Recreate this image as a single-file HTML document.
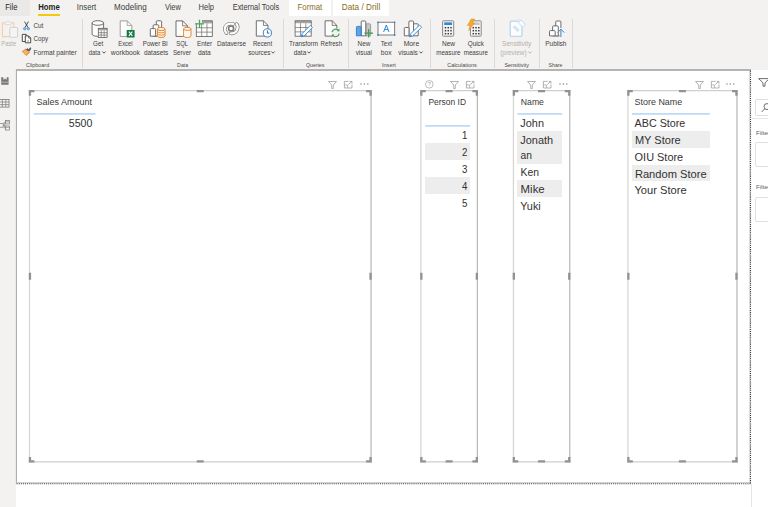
<!DOCTYPE html>
<html><head><meta charset="utf-8"><title>Power BI Desktop</title>
<style>
html,body{margin:0;padding:0}
body{width:768px;height:507px;overflow:hidden;background:#f3f2f1;position:relative;font-family:"Liberation Sans",sans-serif}
.t{position:absolute;white-space:pre;transform-origin:0 0;display:block}
.r{position:absolute;display:block;overflow:visible}
</style></head><body>
<div class="r" style="left:0px;top:0px;width:30px;height:15.5px;background:#eae9e8;"></div>
<div class="r" style="left:289.2px;top:0px;width:42.3px;height:15.6px;background:#ffffff;"></div>
<div class="r" style="left:333.4px;top:0px;width:55.4px;height:15.6px;background:#ffffff;"></div>
<div class="r" style="left:16px;top:70px;width:752px;height:437px;background:#ffffff;"></div>
<div class="r" style="left:16px;top:69.2px;width:735px;height:1.6px;background:#b4b4b4;"></div>
<svg class="r" style="left:0;top:0" width="768" height="507" viewBox="0 0 768 507"><rect x="15.9" y="70" width="1.05" height="413.6" fill="#a9a9a9"/><rect x="16" y="482.2" width="735" height="1" fill="#c6c6c6"/><rect x="749.3" y="70.8" width="1" height="412.6" fill="#d4d4d4"/><path d="M16.6 483.65 H751" stroke="#3c3c3c" stroke-width="1.05" stroke-dasharray="1.05 1.05" fill="none"/><path d="M750.5 70.6 V484" stroke="#3c3c3c" stroke-width="1.1" stroke-dasharray="1.05 1.05" fill="none"/></svg>
<div class="r" style="left:750.8px;top:484px;width:1px;height:23px;background:#e6e6e6;"></div>
<div class="r" style="left:38.1px;top:13.6px;width:21.7px;height:2.2px;background:#f2c811;"></div>
<div class="r" style="left:82.1px;top:19px;width:1px;height:48.5px;background:#dcdad8;"></div>
<div class="r" style="left:282.5px;top:19px;width:1px;height:48.5px;background:#dcdad8;"></div>
<div class="r" style="left:347.7px;top:19px;width:1px;height:48.5px;background:#dcdad8;"></div>
<div class="r" style="left:430.2px;top:19px;width:1px;height:48.5px;background:#dcdad8;"></div>
<div class="r" style="left:494.0px;top:19px;width:1px;height:48.5px;background:#dcdad8;"></div>
<div class="r" style="left:538.8px;top:19px;width:1px;height:48.5px;background:#dcdad8;"></div>
<div class="r" style="left:571.8px;top:19px;width:1px;height:48.5px;background:#dcdad8;"></div>
<svg class="r" style="left:101.6px;top:50.8px" width="4" height="3" viewBox="0 0 4 3"><path d="M0.4 0.5 L2 2.2 L3.6 0.5" fill="none" stroke="#484644" stroke-width="0.9"/></svg>
<svg class="r" style="left:271.4px;top:50.8px" width="4" height="3" viewBox="0 0 4 3"><path d="M0.4 0.5 L2 2.2 L3.6 0.5" fill="none" stroke="#484644" stroke-width="0.9"/></svg>
<svg class="r" style="left:307.4px;top:50.8px" width="4" height="3" viewBox="0 0 4 3"><path d="M0.4 0.5 L2 2.2 L3.6 0.5" fill="none" stroke="#484644" stroke-width="0.9"/></svg>
<svg class="r" style="left:418.8px;top:50.8px" width="4" height="3" viewBox="0 0 4 3"><path d="M0.4 0.5 L2 2.2 L3.6 0.5" fill="none" stroke="#484644" stroke-width="0.9"/></svg>
<svg class="r" style="left:528.0px;top:50.8px" width="4" height="3" viewBox="0 0 4 3"><path d="M0.4 0.5 L2 2.2 L3.6 0.5" fill="none" stroke="#b3b0ad" stroke-width="0.9"/></svg>
<svg class="r" style="left:0;top:0" width="768" height="507" viewBox="0 0 768 507"><path d="M28.80 90.67 H371.70 M28.80 461.77 H371.70" fill="none" stroke="#cfcecd" stroke-width="1.25"/><path d="M29.53 90.05 V462.50" fill="none" stroke="#d6d5d4" stroke-width="1.25"/><path d="M371.07 90.05 V462.50" fill="none" stroke="#b9b8b7" stroke-width="1.25"/><path d="M28.80 90.05 h5.60 v2.30 h-5.60 Z M28.80 90.05 h2.30 v5.60 h-2.30 Z M28.80 460.20 h5.60 v2.30 h-5.60 Z M28.80 456.90 h2.30 v5.60 h-2.30 Z M366.10 90.05 h5.60 v2.30 h-5.60 Z M369.40 90.05 h2.30 v5.60 h-2.30 Z M366.10 460.20 h5.60 v2.30 h-5.60 Z M369.40 456.90 h2.30 v5.60 h-2.30 Z M196.75 90.05 h7.00 v2.30 h-7.00 Z M196.75 460.20 h7.00 v2.30 h-7.00 Z M28.80 272.77 h2.30 v7.00 h-2.30 Z M369.40 272.77 h2.30 v7.00 h-2.30 Z " fill="#939291"/><path d="M420.20 90.67 H478.00 M420.20 461.77 H478.00" fill="none" stroke="#cfcecd" stroke-width="1.25"/><path d="M420.93 90.05 V462.50" fill="none" stroke="#d6d5d4" stroke-width="1.25"/><path d="M477.38 90.05 V462.50" fill="none" stroke="#b9b8b7" stroke-width="1.25"/><path d="M420.20 90.05 h5.60 v2.30 h-5.60 Z M420.20 90.05 h2.30 v5.60 h-2.30 Z M420.20 460.20 h5.60 v2.30 h-5.60 Z M420.20 456.90 h2.30 v5.60 h-2.30 Z M472.40 90.05 h5.60 v2.30 h-5.60 Z M475.70 90.05 h2.30 v5.60 h-2.30 Z M472.40 460.20 h5.60 v2.30 h-5.60 Z M475.70 456.90 h2.30 v5.60 h-2.30 Z M445.60 90.05 h7.00 v2.30 h-7.00 Z M445.60 460.20 h7.00 v2.30 h-7.00 Z M420.20 272.77 h2.30 v7.00 h-2.30 Z M475.70 272.77 h2.30 v7.00 h-2.30 Z " fill="#939291"/><path d="M512.70 90.67 H570.40 M512.70 461.77 H570.40" fill="none" stroke="#cfcecd" stroke-width="1.25"/><path d="M513.43 90.05 V462.50" fill="none" stroke="#d6d5d4" stroke-width="1.25"/><path d="M569.77 90.05 V462.50" fill="none" stroke="#b9b8b7" stroke-width="1.25"/><path d="M512.70 90.05 h5.60 v2.30 h-5.60 Z M512.70 90.05 h2.30 v5.60 h-2.30 Z M512.70 460.20 h5.60 v2.30 h-5.60 Z M512.70 456.90 h2.30 v5.60 h-2.30 Z M564.80 90.05 h5.60 v2.30 h-5.60 Z M568.10 90.05 h2.30 v5.60 h-2.30 Z M564.80 460.20 h5.60 v2.30 h-5.60 Z M568.10 456.90 h2.30 v5.60 h-2.30 Z M538.05 90.05 h7.00 v2.30 h-7.00 Z M538.05 460.20 h7.00 v2.30 h-7.00 Z M512.70 272.77 h2.30 v7.00 h-2.30 Z M568.10 272.77 h2.30 v7.00 h-2.30 Z " fill="#939291"/><path d="M627.20 90.67 H737.60 M627.20 461.77 H737.60" fill="none" stroke="#cfcecd" stroke-width="1.25"/><path d="M627.93 90.05 V462.50" fill="none" stroke="#d6d5d4" stroke-width="1.25"/><path d="M736.98 90.05 V462.50" fill="none" stroke="#b9b8b7" stroke-width="1.25"/><path d="M627.20 90.05 h5.60 v2.30 h-5.60 Z M627.20 90.05 h2.30 v5.60 h-2.30 Z M627.20 460.20 h5.60 v2.30 h-5.60 Z M627.20 456.90 h2.30 v5.60 h-2.30 Z M732.00 90.05 h5.60 v2.30 h-5.60 Z M735.30 90.05 h2.30 v5.60 h-2.30 Z M732.00 460.20 h5.60 v2.30 h-5.60 Z M735.30 456.90 h2.30 v5.60 h-2.30 Z M678.90 90.05 h7.00 v2.30 h-7.00 Z M678.90 460.20 h7.00 v2.30 h-7.00 Z M627.20 272.77 h2.30 v7.00 h-2.30 Z M735.30 272.77 h2.30 v7.00 h-2.30 Z " fill="#939291"/></svg>
<svg class="r" style="left:0;top:0" width="768" height="507"><rect x="33.8" y="113.25" width="61.8" height="1.35" fill="#a9d0f5"/></svg>
<svg class="r" style="left:0;top:0" width="768" height="507"><rect x="425.2" y="125.25" width="45" height="1.35" fill="#a9d0f5"/></svg>
<div class="r" style="left:425.2px;top:143.1px;width:45px;height:16.9px;background:#ededed;"></div>
<div class="r" style="left:425.2px;top:177.2px;width:45px;height:16.9px;background:#ededed;"></div>
<svg class="r" style="left:0;top:0" width="768" height="507"><rect x="517.4" y="113.25" width="44.8" height="1.35" fill="#a9d0f5"/></svg>
<div class="r" style="left:517.4px;top:131.0px;width:44.8px;height:32.6px;background:#ededed;"></div>
<div class="r" style="left:517.4px;top:180.0px;width:44.8px;height:17.0px;background:#ededed;"></div>
<svg class="r" style="left:0;top:0" width="768" height="507"><rect x="632.0" y="113.25" width="77.9" height="1.35" fill="#a9d0f5"/></svg>
<div class="r" style="left:632.0px;top:130.9px;width:77.9px;height:16.8px;background:#ededed;"></div>
<div class="r" style="left:632.0px;top:164.7px;width:77.9px;height:16.8px;background:#ededed;"></div>
<svg class="r" style="left:328.2px;top:80.8px" width="9" height="8" viewBox="0 0 9 8"><path d="M0.5 0.5 H8.5 L5.3 4 V7.5 H3.7 V4 Z" fill="none" stroke="#a19f9d" stroke-width="0.8" stroke-linejoin="round"/></svg>
<svg class="r" style="left:344px;top:81px" width="8.4" height="7.4" viewBox="0 0 8.4 7.4"><path d="M4.6 0.4 H0.4 V7 H8 V3.4" fill="none" stroke="#a19f9d" stroke-width="0.8"/><path d="M0.4 4 H3.6 V7" fill="none" stroke="#a19f9d" stroke-width="0.7"/><path d="M4.2 3.6 L8 0.4 M5.6 0.4 H8 V2.6" fill="none" stroke="#a19f9d" stroke-width="0.8"/></svg>
<svg class="r" style="left:359.6px;top:83.2px" width="9" height="2" viewBox="0 0 9 2"><circle cx="1" cy="1" r="0.75" fill="#8a8886"/><circle cx="4.4" cy="1" r="0.75" fill="#8a8886"/><circle cx="7.8" cy="1" r="0.75" fill="#8a8886"/></svg>
<svg class="r" style="left:425.2px;top:80.4px" width="8.6" height="8.6" viewBox="0 0 8.6 8.6"><circle cx="4.3" cy="4.3" r="3.8" fill="none" stroke="#a19f9d" stroke-width="0.7"/><text x="4.3" y="6.4" font-size="5.6" text-anchor="middle" fill="#a19f9d" font-family="Liberation Sans, sans-serif">?</text></svg>
<svg class="r" style="left:449.8px;top:80.8px" width="9" height="8" viewBox="0 0 9 8"><path d="M0.5 0.5 H8.5 L5.3 4 V7.5 H3.7 V4 Z" fill="none" stroke="#a19f9d" stroke-width="0.8" stroke-linejoin="round"/></svg>
<svg class="r" style="left:466px;top:81px" width="8.4" height="7.4" viewBox="0 0 8.4 7.4"><path d="M4.6 0.4 H0.4 V7 H8 V3.4" fill="none" stroke="#a19f9d" stroke-width="0.8"/><path d="M0.4 4 H3.6 V7" fill="none" stroke="#a19f9d" stroke-width="0.7"/><path d="M4.2 3.6 L8 0.4 M5.6 0.4 H8 V2.6" fill="none" stroke="#a19f9d" stroke-width="0.8"/></svg>
<svg class="r" style="left:527.4px;top:80.8px" width="9" height="8" viewBox="0 0 9 8"><path d="M0.5 0.5 H8.5 L5.3 4 V7.5 H3.7 V4 Z" fill="none" stroke="#a19f9d" stroke-width="0.8" stroke-linejoin="round"/></svg>
<svg class="r" style="left:543.2px;top:81px" width="8.4" height="7.4" viewBox="0 0 8.4 7.4"><path d="M4.6 0.4 H0.4 V7 H8 V3.4" fill="none" stroke="#a19f9d" stroke-width="0.8"/><path d="M0.4 4 H3.6 V7" fill="none" stroke="#a19f9d" stroke-width="0.7"/><path d="M4.2 3.6 L8 0.4 M5.6 0.4 H8 V2.6" fill="none" stroke="#a19f9d" stroke-width="0.8"/></svg>
<svg class="r" style="left:558.6px;top:83.2px" width="9" height="2" viewBox="0 0 9 2"><circle cx="1" cy="1" r="0.75" fill="#8a8886"/><circle cx="4.4" cy="1" r="0.75" fill="#8a8886"/><circle cx="7.8" cy="1" r="0.75" fill="#8a8886"/></svg>
<svg class="r" style="left:694.8px;top:80.8px" width="9" height="8" viewBox="0 0 9 8"><path d="M0.5 0.5 H8.5 L5.3 4 V7.5 H3.7 V4 Z" fill="none" stroke="#a19f9d" stroke-width="0.8" stroke-linejoin="round"/></svg>
<svg class="r" style="left:710.8px;top:81px" width="8.4" height="7.4" viewBox="0 0 8.4 7.4"><path d="M4.6 0.4 H0.4 V7 H8 V3.4" fill="none" stroke="#a19f9d" stroke-width="0.8"/><path d="M0.4 4 H3.6 V7" fill="none" stroke="#a19f9d" stroke-width="0.7"/><path d="M4.2 3.6 L8 0.4 M5.6 0.4 H8 V2.6" fill="none" stroke="#a19f9d" stroke-width="0.8"/></svg>
<svg class="r" style="left:725.6px;top:83.2px" width="9" height="2" viewBox="0 0 9 2"><circle cx="1" cy="1" r="0.75" fill="#8a8886"/><circle cx="4.4" cy="1" r="0.75" fill="#8a8886"/><circle cx="7.8" cy="1" r="0.75" fill="#8a8886"/></svg>
<svg class="r" style="left:0px;top:77px" width="10" height="8" viewBox="0 0 10 8"><path d="M1.2 0.2 V7.8 H8.6 V0.2 H6.6 V3 L5 1.6 L3.4 3 V0.2 Z" fill="#7a7876"/><path d="M1.2 5.2 H8.6" stroke="#f3f2f1" stroke-width="0.5"/></svg>
<svg class="r" style="left:0px;top:98.6px" width="10" height="9" viewBox="0 0 10 9"><rect x="-1" y="0.5" width="10" height="7.6" fill="none" stroke="#7a7876" stroke-width="0.8"/><path d="M-1 3 H9 M-1 5.6 H9 M2.4 0.5 V8 M5.8 0.5 V8" stroke="#7a7876" stroke-width="0.7"/></svg>
<svg class="r" style="left:0px;top:120px" width="11" height="11" viewBox="0 0 11 11"><rect x="5.4" y="0.5" width="4" height="3.4" fill="none" stroke="#7a7876" stroke-width="0.7"/><rect x="5.4" y="6" width="4" height="4" fill="none" stroke="#7a7876" stroke-width="0.7"/><rect x="-1" y="3.6" width="4.2" height="3.6" fill="none" stroke="#7a7876" stroke-width="0.7"/><path d="M3.2 5.4 H5.4 M4.3 2.2 H5.4 M4.3 2.2 V8 H5.4 M5.4 1.8 H9.4 M5.4 7.4 H9.4" stroke="#7a7876" stroke-width="0.6" fill="none"/></svg>
<svg class="r" style="left:757.6px;top:78.4px" width="12" height="9" viewBox="0 0 12 9"><path d="M0.6 0.6 H11.4 L7 4.8 V8.2 H5 V4.8 Z" fill="none" stroke="#605e5c" stroke-width="0.9" stroke-linejoin="round"/></svg>
<div class="r" style="left:755.4px;top:99.3px;width:20px;height:16.6px;background:#ffffff;border:1px solid #e1dfdd;border-radius:2px;box-sizing:border-box;"></div>
<svg class="r" style="left:760.5px;top:103px" width="9" height="10" viewBox="0 0 9 10"><circle cx="6" cy="3.6" r="3" fill="none" stroke="#605e5c" stroke-width="0.9"/><path d="M3.8 5.8 L0.6 9" stroke="#605e5c" stroke-width="0.9"/></svg>
<div class="r" style="left:752px;top:118px;width:16px;height:1px;background:#e8e6e4;"></div>
<div class="r" style="left:755.4px;top:142.1px;width:20px;height:25.3px;background:#ffffff;border:1px solid #e1dfdd;border-radius:2px;box-sizing:border-box;"></div>
<div class="r" style="left:755.4px;top:196.6px;width:20px;height:25.4px;background:#ffffff;border:1px solid #e1dfdd;border-radius:2px;box-sizing:border-box;"></div>
<svg class="r" style="left:0;top:0" width="768" height="72" viewBox="0 0 768 72"><path d="M5 22.8 H2.4 V36.6 H9.6 M11.2 22.8 H13.8 V27.2" fill="none" stroke="#f5cfa2" stroke-width="1.1"/><path d="M5 24.6 V22.4 H6.8 Q8.1 19.6 9.4 22.4 H11.2 V24.6 Z" fill="#f7f7f7" stroke="#d6d4d2" stroke-width="0.8"/><rect x="9.8" y="27.4" width="7.8" height="9.9" rx="0.8" fill="#f4f4f4" stroke="#cfcdcb" stroke-width="0.9"/><path d="M24.6 21.6 L28 27.6 M28.4 21.6 L25 27.6" stroke="#3b3a39" stroke-width="0.9" fill="none"/><circle cx="24.7" cy="28.7" r="1.15" fill="#9cc7ee" stroke="#2b88d8" stroke-width="0.8"/><circle cx="28.3" cy="28.7" r="1.15" fill="#9cc7ee" stroke="#2b88d8" stroke-width="0.8"/><path d="M22.3 34.4 H26.2 V41.5 H22.3 Z" fill="#fdfdfd" stroke="#3b3a39" stroke-width="0.9"/><path d="M25.3 35.9 H28.6 L30.7 38 V42.8 H25.3 Z" fill="#fdfdfd" stroke="#3b3a39" stroke-width="0.9" stroke-linejoin="round"/><path d="M28.6 35.9 V38 H30.7" fill="none" stroke="#3b3a39" stroke-width="0.7"/><path d="M27.2 40.4 H29 M27.2 41.5 H29" stroke="#8a8886" stroke-width="0.5"/><path d="M22.2 51.6 L25.6 48.9 L29.6 52.6 L26.2 55.6 Z" fill="#f0a04a" stroke="#e8882e" stroke-width="0.7" stroke-linejoin="round"/><path d="M23.4 52.6 L26.6 50.2 M24.8 53.8 L28 51.4" stroke="#fbe0bf" stroke-width="0.6"/><path d="M26.2 49.6 L27.6 48.6 L28.8 49.8 L30.2 47.6 L31 48.4 L29.4 51.2 Z" fill="#605e5c" stroke="#3b3a39" stroke-width="0.5"/><path d="M92.1 23.0 V34.1 A5.75 2.3 0 0 0 103.6 34.1 V23.0" fill="#fdfdfd" stroke="#605e5c" stroke-width="0.9"/><ellipse cx="97.85" cy="23.0" rx="5.75" ry="2.3" fill="#fdfdfd" stroke="#605e5c" stroke-width="0.9"/><rect x="98.3" y="28.3" width="8.799999999999997" height="9.2" fill="#fdfdfd" stroke="#605e5c" stroke-width="0.8"/><rect x="98.3" y="28.3" width="8.799999999999997" height="2.0" fill="#605e5c" opacity="0.55"/><path d="M101.23 30.3 V37.5 M104.17 30.3 V37.5 M98.3 32.70 H107.1 M98.3 35.10 H107.1 " stroke="#605e5c" stroke-width="0.6400000000000001" fill="none"/><path d="M120.2 20.9 H127.20000000000002 L131.8 25.5 V36.5 H120.2 Z" fill="#fdfdfd" stroke="#979593" stroke-width="0.9" stroke-linejoin="round"/><path d="M127.20000000000002 20.9 V25.5 H131.8" fill="none" stroke="#979593" stroke-width="0.765" stroke-linejoin="round"/><rect x="126.7" y="29.9" width="7.9" height="7.7" rx="0.5" fill="#107c41"/><path d="M128.9 31.7 L132.4 35.9 M132.4 31.7 L128.9 35.9" stroke="#ffffff" stroke-width="1.1"/><path d="M156.3 36.2 V21.7 Q156.3 20.8 157.20000000000002 20.8 H160.7 Q161.6 20.8 161.6 21.7 V36.2 Z" fill="#fdfdfd" stroke="#605e5c" stroke-width="0.9" stroke-linejoin="round"/><path d="M153.2 36.2 V25.7 Q153.2 24.8 154.1 24.8 H157.9 Q158.8 24.8 158.8 25.7 V36.2 Z" fill="#fdfdfd" stroke="#605e5c" stroke-width="0.9" stroke-linejoin="round"/><path d="M150.3 36.2 V29.5 Q150.3 28.6 151.20000000000002 28.6 H154.7 Q155.6 28.6 155.6 29.5 V36.2 Z" fill="#fdfdfd" stroke="#605e5c" stroke-width="0.9" stroke-linejoin="round"/><path d="M157.4 29.0 V35.9 A3.799999999999997 1.6 0 0 0 165 35.9 V29.0" fill="#fdf3e8" stroke="#e8882e" stroke-width="1.0"/><ellipse cx="161.2" cy="29.0" rx="3.799999999999997" ry="1.6" fill="#fdf3e8" stroke="#e8882e" stroke-width="1.0"/><path d="M157.4 31.3 A3.799999999999997 1.6 0 0 0 165 31.3" fill="none" stroke="#e8882e" stroke-width="0.9"/><path d="M157.4 33.6 A3.799999999999997 1.6 0 0 0 165 33.6" fill="none" stroke="#e8882e" stroke-width="0.9"/><path d="M176.0 20.9 H182.6 L187.6 25.9 V36.4 H176.0 Z" fill="#fdfdfd" stroke="#605e5c" stroke-width="0.9" stroke-linejoin="round"/><path d="M182.6 20.9 V25.9 H187.6" fill="none" stroke="#605e5c" stroke-width="0.765" stroke-linejoin="round"/><path d="M183.6 28.9 V36.0 A3.700000000000003 1.5 0 0 0 191.0 36.0 V28.9" fill="#fffaf5" stroke="#e8882e" stroke-width="1.0"/><ellipse cx="187.3" cy="28.9" rx="3.700000000000003" ry="1.5" fill="#fffaf5" stroke="#e8882e" stroke-width="1.0"/><rect x="196.3" y="20.8" width="16.0" height="15.7" fill="#fdfdfd" stroke="#605e5c" stroke-width="0.8"/><rect x="196.3" y="20.8" width="16.0" height="2.6" fill="#605e5c" opacity="0.55"/><path d="M201.63 23.400000000000002 V36.5 M206.97 23.400000000000002 V36.5 M196.3 27.77 H212.3 M196.3 32.13 H212.3 " stroke="#605e5c" stroke-width="0.6400000000000001" fill="none"/><rect x="195.4" y="19.4" width="6.6" height="4" fill="#f3f2f1"/><path d="M195.1 23.8 H203.9 M199.5 19.7 V27.9" stroke="#4ba35f" stroke-width="1.3"/><path d="M236.5 24.0 C237.8 25.4 238 27.4 237.2 29.4 C236 32.4 233.2 33.8 230.6 33.3" fill="none" stroke="#6e6c6a" stroke-width="3.5" stroke-linecap="round"/><path d="M236.5 24.0 C237.8 25.4 238 27.4 237.2 29.4 C236 32.4 233.2 33.8 230.6 33.3" fill="none" stroke="#fdfdfd" stroke-width="2.3" stroke-linecap="round"/><path d="M233.0 23.9 C228 22.8 224.5 25.6 224.8 29.4 C225 31.2 225.6 32.2 226.6 33.1" fill="none" stroke="#6e6c6a" stroke-width="3.5" stroke-linecap="round"/><path d="M233.0 23.9 C228 22.8 224.5 25.6 224.8 29.4 C225 31.2 225.6 32.2 226.6 33.1" fill="none" stroke="#fdfdfd" stroke-width="2.3" stroke-linecap="round"/><circle cx="231.1" cy="28.5" r="2.5" fill="#fdfdfd" stroke="#7a7876" stroke-width="1.5"/><path d="M256.3 20.8 H263.4 L268.0 25.4 V36.1 H256.3 Z" fill="#fdfdfd" stroke="#605e5c" stroke-width="0.9" stroke-linejoin="round"/><path d="M263.4 20.8 V25.4 H268.0" fill="none" stroke="#605e5c" stroke-width="0.765" stroke-linejoin="round"/><circle cx="267.4" cy="32.9" r="4.1" fill="#fdfdfd" stroke="#2b88d8" stroke-width="1"/><path d="M267.4 30.4 V33.1 H269.4" fill="none" stroke="#3b3a39" stroke-width="0.8"/><rect x="295.1" y="20.8" width="16.099999999999966" height="15.400000000000002" fill="#fdfdfd" stroke="#605e5c" stroke-width="0.8"/><rect x="295.1" y="20.8" width="16.099999999999966" height="2.4" fill="#605e5c" opacity="0.55"/><path d="M300.47 23.2 V36.2 M305.83 23.2 V36.2 M295.1 27.53 H311.2 M295.1 31.87 H311.2 " stroke="#605e5c" stroke-width="0.6400000000000001" fill="none"/><path d="M310.33 25.35 L301.95 33.89 L301.20 36.80 L304.09 35.99 L312.47 27.45 Z" fill="#fdfdfd" stroke="#2b88d8" stroke-width="0.9" stroke-linejoin="round"/><path d="M302.49 34.42 L301.20 36.80 L303.56 35.47 Z" fill="#2b88d8"/><path d="M325.1 20.8 H332.2 L336.8 25.4 V36.1 H325.1 Z" fill="#fdfdfd" stroke="#605e5c" stroke-width="0.9" stroke-linejoin="round"/><path d="M332.2 20.8 V25.4 H336.8" fill="none" stroke="#605e5c" stroke-width="0.765" stroke-linejoin="round"/><circle cx="335.6" cy="32.9" r="4.6" fill="#f3f2f1"/><path d="M332 32.2 A3.7 3.7 0 0 1 338.6 30.6 M339.2 33.6 A3.7 3.7 0 0 1 332.6 35.2" fill="none" stroke="#3a9b4e" stroke-width="1.1"/><path d="M339.4 28.6 V31.2 H336.8 Z M331.8 37.2 V34.6 H334.4 Z" fill="#3a9b4e"/><path d="M365.6 35.8 V24.7 Q365.6 23.8 366.5 23.8 H369.70000000000005 Q370.6 23.8 370.6 24.7 V35.8 Z" fill="#c8c6c4" stroke="#979593" stroke-width="0.9" stroke-linejoin="round"/><path d="M361.2 35.8 V21.9 Q361.2 21 362.09999999999997 21 H364.90000000000003 Q365.8 21 365.8 21.9 V35.8 Z" fill="#fdfdfd" stroke="#605e5c" stroke-width="0.9" stroke-linejoin="round"/><path d="M356.4 35.8 V27.299999999999997 Q356.4 26.4 357.29999999999995 26.4 H360.3 Q361.2 26.4 361.2 27.299999999999997 V35.8 Z" fill="#5ea3e4" stroke="#2b7cd3" stroke-width="0.9" stroke-linejoin="round"/><path d="M364.4 33.2 H373 M368.7 28.9 V37.5" stroke="#3a9b4e" stroke-width="1.2"/><rect x="378" y="22.3" width="16.6" height="12.7" fill="#fdfdfd" stroke="#8a8886" stroke-width="1.1"/><circle cx="378" cy="22.3" r="0.9" fill="#2b88d8"/><circle cx="394.6" cy="22.3" r="0.9" fill="#2b88d8"/><circle cx="378" cy="35" r="0.9" fill="#2b88d8"/><circle cx="394.6" cy="35" r="0.9" fill="#2b88d8"/><path d="M383.6 32 L386.3 25 L389 32 M384.6 29.6 H388" fill="none" stroke="#2b88d8" stroke-width="1"/><path d="M413.4 35.8 V24.7 Q413.4 23.8 414.29999999999995 23.8 H417.3 Q418.2 23.8 418.2 24.7 V35.8 Z" fill="#fdfdfd" stroke="#605e5c" stroke-width="0.9" stroke-linejoin="round"/><path d="M408.9 35.8 V21.9 Q408.9 21 409.79999999999995 21 H412.70000000000005 Q413.6 21 413.6 21.9 V35.8 Z" fill="#fdfdfd" stroke="#605e5c" stroke-width="0.9" stroke-linejoin="round"/><path d="M404.3 35.8 V28.4 Q404.3 27.5 405.2 27.5 H408.1 Q409 27.5 409 28.4 V35.8 Z" fill="#fdfdfd" stroke="#605e5c" stroke-width="0.9" stroke-linejoin="round"/><path d="M419.56 25.12 L410.43 33.92 L409.60 36.80 L412.51 36.08 L421.64 27.28 Z" fill="#fdfdfd" stroke="#2b88d8" stroke-width="0.9" stroke-linejoin="round"/><path d="M410.95 34.46 L409.60 36.80 L411.99 35.54 Z" fill="#2b88d8"/><rect x="442.6" y="20.8" width="11.099999999999966" height="15.400000000000002" rx="0.8" fill="#f6f6f6" stroke="#8a8886" stroke-width="1"/><rect x="444.20000000000005" y="22.400000000000002" width="7.899999999999966" height="2.6" fill="#2b88d8"/><rect x="444.75" y="26.95" width="1.5" height="1.5" fill="#3b3a39"/><rect x="447.50" y="26.95" width="1.5" height="1.5" fill="#3b3a39"/><rect x="450.25" y="26.95" width="1.5" height="1.5" fill="#3b3a39"/><rect x="444.75" y="29.95" width="1.5" height="1.5" fill="#3b3a39"/><rect x="447.50" y="29.95" width="1.5" height="1.5" fill="#3b3a39"/><rect x="450.25" y="29.95" width="1.5" height="1.5" fill="#3b3a39"/><rect x="444.75" y="32.95" width="1.5" height="1.5" fill="#3b3a39"/><rect x="447.50" y="32.95" width="1.5" height="1.5" fill="#3b3a39"/><rect x="450.25" y="32.95" width="1.5" height="1.5" fill="#3b3a39"/><rect x="470.4" y="20.8" width="10.800000000000011" height="15.400000000000002" rx="0.8" fill="#f6f6f6" stroke="#8a8886" stroke-width="1"/><rect x="472.0" y="22.400000000000002" width="7.600000000000011" height="2.6" fill="#c8c6c4"/><rect x="472.55" y="26.95" width="1.5" height="1.5" fill="#3b3a39"/><rect x="475.30" y="26.95" width="1.5" height="1.5" fill="#3b3a39"/><rect x="478.05" y="26.95" width="1.5" height="1.5" fill="#3b3a39"/><rect x="472.55" y="29.95" width="1.5" height="1.5" fill="#3b3a39"/><rect x="475.30" y="29.95" width="1.5" height="1.5" fill="#3b3a39"/><rect x="478.05" y="29.95" width="1.5" height="1.5" fill="#3b3a39"/><rect x="472.55" y="32.95" width="1.5" height="1.5" fill="#3b3a39"/><rect x="475.30" y="32.95" width="1.5" height="1.5" fill="#3b3a39"/><rect x="478.05" y="32.95" width="1.5" height="1.5" fill="#3b3a39"/><path d="M471.2 19 L474.6 19 L472.4 23 L474.6 23 L468.6 30.6 L470.2 25.4 L467.4 25.4 Z" fill="#f7a928" stroke="#dc8c1e" stroke-width="0.5" stroke-linejoin="round"/><path d="M510.3 21.2 H517 M521.9 27 V36.3 H510.3 V21.2" fill="#fdfdfd" stroke="#b9d8f1" stroke-width="1"/><rect x="510.8" y="21.7" width="10.6" height="14.1" fill="#fdfdfd"/><path d="M510.3 21.2 H521.9 V36.3 H510.3 Z" fill="none" stroke="#b9d8f1" stroke-width="1"/><g transform="translate(516.6,29) rotate(45)"><rect x="-4" y="-1.7" width="7" height="3.4" fill="#d6e8f7"/></g><g transform="translate(521.6,23.4) rotate(-45)"><rect x="-1.9" y="-3" width="3.8" height="6.2" fill="#fdfdfd" stroke="#b9d8f1" stroke-width="0.9"/><rect x="-1" y="-5" width="2" height="2" fill="#fdfdfd" stroke="#b9d8f1" stroke-width="0.8"/></g><path d="M555.7 35.9 V21.9 Q555.7 21 556.6 21 H560.0 Q560.9 21 560.9 21.9 V35.9 Z" fill="#fdfdfd" stroke="#605e5c" stroke-width="0.9" stroke-linejoin="round"/><path d="M552.6 35.9 V26.799999999999997 Q552.6 25.9 553.5 25.9 H557.4 Q558.3 25.9 558.3 26.799999999999997 V35.9 Z" fill="#fdfdfd" stroke="#605e5c" stroke-width="0.9" stroke-linejoin="round"/><path d="M549.5 35.9 V31.5 Q549.5 30.6 550.4 30.6 H554.3000000000001 Q555.2 30.6 555.2 31.5 V35.9 Z" fill="#fdfdfd" stroke="#605e5c" stroke-width="0.9" stroke-linejoin="round"/><rect x="559.6" y="28" width="3" height="9" fill="#f3f2f1"/><path d="M560.9 29.2 V37 M557.6 32.6 L560.9 29.2 L564.3 32.6" fill="none" stroke="#3a86c8" stroke-width="1"/></svg>
<svg class="r" style="left:0;top:0" width="768" height="507" font-family="Liberation Sans, sans-serif" xml:space="preserve">
<text transform="translate(5.20,10) scale(0.9139,1)" font-size="8.3" fill="#252423">File</text>
<text transform="translate(38.20,10) scale(0.9371,1)" font-size="8.3" fill="#201f1e" font-weight="700">Home</text>
<text transform="translate(76.80,10) scale(0.9349,1)" font-size="8.3" fill="#3b3a39">Insert</text>
<text transform="translate(114.10,10) scale(0.9703,1)" font-size="8.3" fill="#3b3a39">Modeling</text>
<text transform="translate(164.90,10) scale(0.8939,1)" font-size="8.3" fill="#3b3a39">View</text>
<text transform="translate(198.50,10) scale(0.9150,1)" font-size="8.3" fill="#3b3a39">Help</text>
<text transform="translate(232.70,10) scale(0.8942,1)" font-size="8.3" fill="#3b3a39">External Tools</text>
<text transform="translate(297.60,10) scale(0.9392,1)" font-size="8.3" fill="#8a6d1b">Format</text>
<text transform="translate(341.80,10) scale(0.9935,1)" font-size="8.3" fill="#8a6d1b">Data / Drill</text>
<text transform="translate(1.30,46) scale(0.8209,1)" font-size="7.1" fill="#b3b0ad">Paste</text>
<text transform="translate(33.40,28) scale(0.9050,1)" font-size="7.1" fill="#403e3c">Cut</text>
<text transform="translate(33.40,41) scale(0.8822,1)" font-size="7.1" fill="#403e3c">Copy</text>
<text transform="translate(33.40,55) scale(0.9404,1)" font-size="7.1" fill="#403e3c">Format painter</text>
<text transform="translate(93.10,46) scale(0.8908,1)" font-size="7.1" fill="#403e3c">Get</text>
<text transform="translate(88.70,55) scale(0.8333,1)" font-size="7.1" fill="#403e3c">data</text>
<text transform="translate(118.20,46) scale(0.8300,1)" font-size="7.1" fill="#403e3c">Excel</text>
<text transform="translate(110.75,55) scale(0.9607,1)" font-size="7.1" fill="#403e3c">workbook</text>
<text transform="translate(142.80,46) scale(0.8681,1)" font-size="7.1" fill="#403e3c">Power BI</text>
<text transform="translate(144.00,55) scale(0.9013,1)" font-size="7.1" fill="#403e3c">datasets</text>
<text transform="translate(176.20,46) scale(0.8310,1)" font-size="7.1" fill="#403e3c">SQL</text>
<text transform="translate(172.90,55) scale(0.8756,1)" font-size="7.1" fill="#403e3c">Server</text>
<text transform="translate(197.00,46) scale(0.8850,1)" font-size="7.1" fill="#403e3c">Enter</text>
<text transform="translate(197.90,55) scale(0.9348,1)" font-size="7.1" fill="#403e3c">data</text>
<text transform="translate(217.00,46) scale(0.8964,1)" font-size="7.1" fill="#403e3c">Dataverse</text>
<text transform="translate(252.90,46) scale(0.8578,1)" font-size="7.1" fill="#403e3c">Recent</text>
<text transform="translate(248.20,55) scale(0.8934,1)" font-size="7.1" fill="#403e3c">sources</text>
<text transform="translate(289.10,46) scale(0.9003,1)" font-size="7.1" fill="#403e3c">Transform</text>
<text transform="translate(293.70,55) scale(0.9058,1)" font-size="7.1" fill="#403e3c">data</text>
<text transform="translate(320.60,46) scale(0.8652,1)" font-size="7.1" fill="#403e3c">Refresh</text>
<text transform="translate(357.60,46) scale(0.9053,1)" font-size="7.1" fill="#403e3c">New</text>
<text transform="translate(355.70,55) scale(0.8926,1)" font-size="7.1" fill="#403e3c">visual</text>
<text transform="translate(380.80,46) scale(0.8615,1)" font-size="7.1" fill="#403e3c">Text</text>
<text transform="translate(380.80,55) scale(0.9432,1)" font-size="7.1" fill="#403e3c">box</text>
<text transform="translate(403.70,46) scale(0.9568,1)" font-size="7.1" fill="#403e3c">More</text>
<text transform="translate(398.30,55) scale(0.8986,1)" font-size="7.1" fill="#403e3c">visuals</text>
<text transform="translate(441.90,46) scale(0.9263,1)" font-size="7.1" fill="#403e3c">New</text>
<text transform="translate(436.20,55) scale(0.8804,1)" font-size="7.1" fill="#403e3c">measure</text>
<text transform="translate(467.70,46) scale(0.8956,1)" font-size="7.1" fill="#403e3c">Quick</text>
<text transform="translate(463.70,55) scale(0.8804,1)" font-size="7.1" fill="#403e3c">measure</text>
<text transform="translate(502.10,46) scale(0.9139,1)" font-size="7.1" fill="#b3b0ad">Sensitivity</text>
<text transform="translate(500.20,55) scale(0.9041,1)" font-size="7.1" fill="#b3b0ad">(preview)</text>
<text transform="translate(545.30,46) scale(0.9099,1)" font-size="7.1" fill="#403e3c">Publish</text>
<text transform="translate(26.00,67) scale(0.9027,1)" font-size="6.0" fill="#4a4846">Clipboard</text>
<text transform="translate(177.10,67) scale(0.8740,1)" font-size="6.0" fill="#4a4846">Data</text>
<text transform="translate(305.90,67) scale(0.8857,1)" font-size="6.0" fill="#4a4846">Queries</text>
<text transform="translate(382.00,67) scale(0.9267,1)" font-size="6.0" fill="#4a4846">Insert</text>
<text transform="translate(447.20,67) scale(0.9083,1)" font-size="6.0" fill="#4a4846">Calculations</text>
<text transform="translate(504.50,67) scale(0.9037,1)" font-size="6.0" fill="#4a4846">Sensitivity</text>
<text transform="translate(548.60,67) scale(0.8687,1)" font-size="6.0" fill="#4a4846">Share</text>
<text transform="translate(36.60,105) scale(1.0239,1)" font-size="8.8" fill="#3b3a39">Sales Amount</text>
<text transform="translate(68.80,127) scale(1.0194,1)" font-size="10.4" fill="#323130">5500</text>
<text transform="translate(428.40,105) scale(0.9655,1)" font-size="8.8" fill="#3b3a39">Person ID</text>
<text transform="translate(461.91,139) scale(0.9300,1)" font-size="10.4" fill="#323130">1</text>
<text transform="translate(461.91,156) scale(0.9300,1)" font-size="10.4" fill="#323130">2</text>
<text transform="translate(461.91,173) scale(0.9300,1)" font-size="10.4" fill="#323130">3</text>
<text transform="translate(461.91,190) scale(0.9300,1)" font-size="10.4" fill="#323130">4</text>
<text transform="translate(461.91,207) scale(0.9300,1)" font-size="10.4" fill="#323130">5</text>
<text transform="translate(520.80,105) scale(0.9872,1)" font-size="8.8" fill="#3b3a39">Name</text>
<text transform="translate(520.30,127) scale(1.0510,1)" font-size="10.4" fill="#323130">John</text>
<text transform="translate(520.30,144) scale(1.0528,1)" font-size="10.4" fill="#323130">Jonath</text>
<text transform="translate(520.60,159) scale(0.9870,1)" font-size="10.4" fill="#323130">an</text>
<text transform="translate(520.60,176) scale(0.9946,1)" font-size="10.4" fill="#323130">Ken</text>
<text transform="translate(520.60,193) scale(1.0979,1)" font-size="10.4" fill="#323130">Mike</text>
<text transform="translate(520.20,210) scale(1.0483,1)" font-size="10.4" fill="#323130">Yuki</text>
<text transform="translate(634.60,105) scale(1.0160,1)" font-size="8.8" fill="#3b3a39">Store Name</text>
<text transform="translate(634.60,127) scale(1.0336,1)" font-size="10.4" fill="#323130">ABC Store</text>
<text transform="translate(634.90,144) scale(1.0637,1)" font-size="10.4" fill="#323130">MY Store</text>
<text transform="translate(634.60,161) scale(1.0530,1)" font-size="10.4" fill="#323130">OIU Store</text>
<text transform="translate(634.90,178) scale(1.0708,1)" font-size="10.4" fill="#323130">Random Store</text>
<text transform="translate(634.40,194) scale(1.0728,1)" font-size="10.4" fill="#323130">Your Store</text>
<text transform="translate(756.00,135) scale(1.0355,1)" font-size="6.2" fill="#605e5c">Filters</text>
<text transform="translate(756.00,189) scale(1.0355,1)" font-size="6.2" fill="#605e5c">Filters</text>
</svg>
</body></html>
